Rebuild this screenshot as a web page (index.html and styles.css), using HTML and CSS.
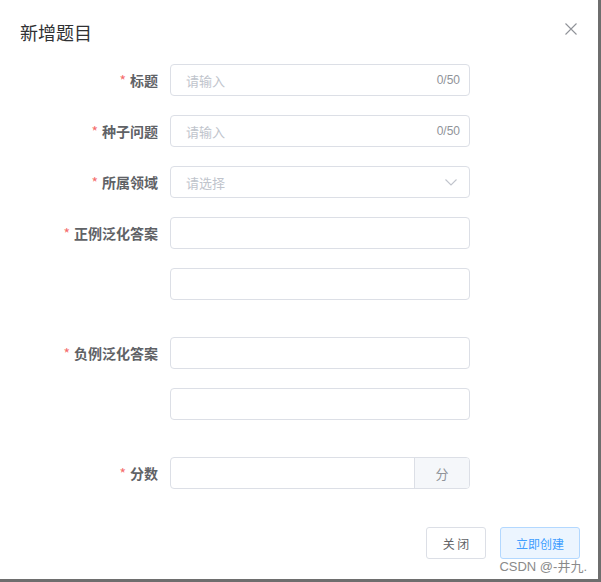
FILE: index.html
```html
<!DOCTYPE html>
<html lang="zh">
<head>
<meta charset="utf-8">
<title>新增题目</title>
<link rel="stylesheet" href="styles.css">
</head>
<body>
<div class="dialog">
  <div class="dialog-header">
    <span class="dialog-title">新增题目</span>
    <span class="dialog-close">
      <svg width="12" height="12" viewBox="0 0 12 12"><path d="M0.5 0.5 L11.5 11.5 M11.5 0.5 L0.5 11.5" stroke="#909399" stroke-width="1.1" fill="none"/></svg>
    </span>
  </div>
  <div class="dialog-body">
    <div class="form-item">
      <label class="form-label"><span class="req">*</span>标题</label>
      <div class="input">
        <span class="placeholder">请输入</span>
        <span class="count">0/50</span>
      </div>
    </div>
    <div class="form-item">
      <label class="form-label"><span class="req">*</span>种子问题</label>
      <div class="input">
        <span class="placeholder">请输入</span>
        <span class="count">0/50</span>
      </div>
    </div>
    <div class="form-item">
      <label class="form-label"><span class="req">*</span>所属领域</label>
      <div class="input">
        <span class="placeholder">请选择</span>
        <svg class="arrow" width="12" height="7" viewBox="0 0 12 7"><path d="M0.5 0.5 L6 6 L11.5 0.5" stroke="#c0c4cc" stroke-width="1.1" fill="none"/></svg>
      </div>
    </div>
    <div class="form-group">
      <div class="form-item">
        <label class="form-label"><span class="req">*</span>正例泛化答案</label>
        <div class="input"></div>
      </div>
      <div class="form-item">
        <label class="form-label"></label>
        <div class="input"></div>
      </div>
    </div>
    <div class="form-group">
      <div class="form-item">
        <label class="form-label"><span class="req">*</span>负例泛化答案</label>
        <div class="input"></div>
      </div>
      <div class="form-item">
        <label class="form-label"></label>
        <div class="input"></div>
      </div>
    </div>
    <div class="form-item">
      <label class="form-label"><span class="req">*</span>分数</label>
      <div class="input input-group">
        <div class="input-main"></div>
        <div class="append">分</div>
      </div>
    </div>
  </div>
  <div class="dialog-footer">
    <button class="btn">关 闭</button>
    <button class="btn btn-primary">立即创建</button>
  </div>
  <div class="watermark">CSDN @-井九.</div>
</div>
</body>
</html>
```

FILE: styles.css
```css
html, body {
  margin: 0;
  padding: 0;
}
body {
  width: 601px;
  height: 582px;
  background: #6e6e6e;
  font-family: "Noto Sans CJK SC", "Liberation Sans", sans-serif;
  overflow: hidden;
}
.dialog {
  position: relative;
  width: 598px;
  height: 579px;
  background: #fff;
  box-sizing: border-box;
}
.dialog-header {
  padding: 20px 20px 10px;
  display: flex;
  justify-content: space-between;
  align-items: center;
  height: 24px;
}
.dialog-title {
  font-size: 18px;
  line-height: 24px;
  color: #303133;
}
.dialog-close {
  display: flex;
  margin-right: 1px;
  margin-top: -6px;
}
.dialog-body {
  padding: 10px 20px 0;
}
.form-item {
  display: flex;
  align-items: center;
  margin-bottom: 19px;
}
.form-group {
  padding-bottom: 18px;
}
.form-label {
  width: 138px;
  padding-right: 12px;
  text-align: right;
  font-size: 14px;
  font-weight: 700;
  color: #606266;
  line-height: 32px;
}
.req {
  color: #f56c6c;
  font-weight: 400;
  margin-right: 4px;
}
.input {
  width: 300px;
  height: 32px;
  box-sizing: border-box;
  border: 1px solid #dcdfe6;
  border-radius: 4px;
  display: flex;
  align-items: center;
  padding: 0 9px 0 15px;
}
.placeholder {
  flex: 1;
  font-size: 13px;
  color: #c0c4cc;
}
.count {
  font-family: "Liberation Sans", sans-serif;
  font-size: 12px;
  color: #909399;
}
.arrow {
  margin-right: 3px;
}
.input-group {
  padding: 0;
  overflow: hidden;
}
.input-main {
  flex: 1;
  height: 100%;
}
.append {
  width: 54px;
  height: 100%;
  background: #f5f7fa;
  border-left: 1px solid #dcdfe6;
  display: flex;
  align-items: center;
  justify-content: center;
  font-size: 13px;
  color: #909399;
}
.dialog-footer {
  display: flex;
  justify-content: flex-end;
  gap: 14px;
  padding: 19px 18px 0 0;
}
.btn {
  height: 32px;
  padding: 0 15px;
  border: 1px solid #dcdfe6;
  border-radius: 3px;
  background: #fff;
  color: #606266;
  font-family: "Noto Sans CJK SC", sans-serif;
  font-size: 12px;
  cursor: pointer;
}
.btn:first-child {
  width: 60px;
}
.btn-primary {
  width: 80px;
  background: #ecf5ff;
  border-color: #b3d8ff;
  color: #409eff;
}
.watermark {
  position: absolute;
  right: 11px;
  top: 559px;
  font-family: "Liberation Sans", "Noto Sans CJK SC", sans-serif;
  font-size: 13px;
  line-height: 15px;
  color: #8a8a8a;
  white-space: nowrap;
}
```
